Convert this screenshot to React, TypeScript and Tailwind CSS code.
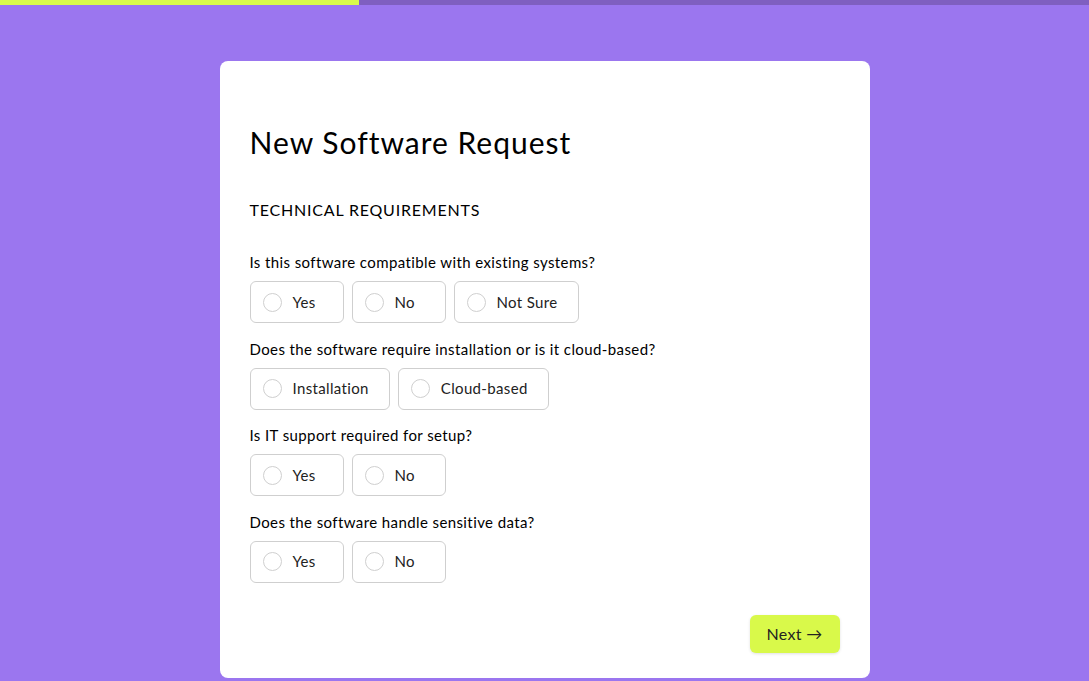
const questions: { label: string; options: string[] }[] = [
  { label: "Is this software compatible with existing systems?", options: ["Yes", "No", "Not Sure"] },
  { label: "Does the software require installation or is it cloud-based?", options: ["Installation", "Cloud-based"] },
  { label: "Is IT support required for setup?", options: ["Yes", "No"] },
  { label: "Does the software handle sensitive data?", options: ["Yes", "No"] },
];

function Option({ text }: { text: string }) {
  return (
    <label className="flex items-center h-[42px] min-w-[94px] pl-[12px] pr-[20px] border border-[#cfcfcf] rounded-[6px] bg-white cursor-pointer">
      <span className="w-[19px] h-[19px] rounded-full border border-[#cfcfcf] mr-[11px] shrink-0" />
      <span className="text-[15px] tracking-[0.35px] text-[#222]">{text}</span>
    </label>
  );
}

export default function App() {
  return (
    <div className="min-h-[681px] bg-[#9b76ef] font-['Lato',sans-serif] text-black">
      <div className="h-[5px] bg-[#7f5fc0]">
        <div className="h-full w-[359px] bg-[#d9f94a]" />
      </div>
      <div className="flex justify-center pt-[56px]">
        <div className="w-[650px] bg-white rounded-[8px] px-[30px] pt-[61px] pb-[25px]">
          <h1 className="text-[30px] leading-[40px] tracking-[1px]">New Software Request</h1>
          <h2 className="text-[16px] mt-[38px] leading-[20px] tracking-[0.8px] uppercase">Technical Requirements</h2>
          <div className="mt-[32px] flex flex-col gap-[15.5px]">
            {questions.map((q) => (
              <div key={q.label}>
                <p className="text-[15px] leading-[20px] tracking-[0.4px] mb-[9px]">{q.label}</p>
                <div className="flex gap-[8px]">
                  {q.options.map((o) => (
                    <Option key={o} text={o} />
                  ))}
                </div>
              </div>
            ))}
          </div>
          <div className="flex justify-end mt-[32.5px]">
            <button className="h-[38px] px-[17px] rounded-[6px] bg-[#d9f94a] text-[16px] tracking-[0.3px] text-[#222] shadow-[0_1px_3px_rgba(0,0,0,0.12)]">
              Next →
            </button>
          </div>
        </div>
      </div>
    </div>
  );
}
